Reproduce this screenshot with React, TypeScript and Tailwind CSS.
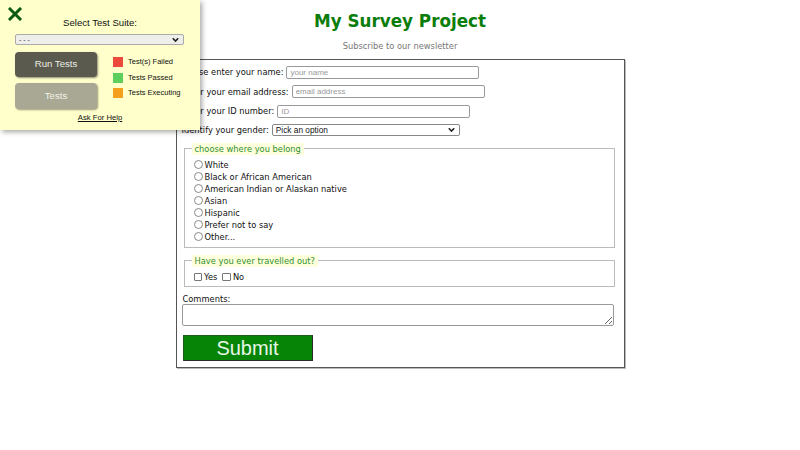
import React from 'react';

const races = [
  'White',
  'Black or African American',
  'American Indian or Alaskan native',
  'Asian',
  'Hispanic',
  'Prefer not to say',
  'Other...',
];

const Chevron: React.FC = () => (
  <svg width="7" height="5" viewBox="0 0 7 5" className="absolute right-[5px] top-1/2 -translate-y-1/2 pointer-events-none">
    <path d="M0.8 0.8 L3.5 3.6 L6.2 0.8" fill="none" stroke="#222" strokeWidth="1.6" />
  </svg>
);

const TestPanel: React.FC = () => {
  return (
    <aside className="absolute left-0 top-0 w-[200px] h-[130px] bg-[#ffffcc] shadow-[2px_2px_5px_rgba(0,0,0,0.35)] font-['Liberation_Sans',Arial,sans-serif] text-[#111]">
      {/* close */}
      <svg width="14" height="14" viewBox="0 0 14 14" className="absolute left-[8px] top-[7px]">
        <path d="M2 2 L12 12 M12 2 L2 12" stroke="#0b5a14" strokeWidth="3" strokeLinecap="square" />
      </svg>

      <p className="pt-[17px] text-center text-[9.6px] leading-[12px]">Select Test Suite:</p>

      <div className="relative mx-[15px] mt-[5px] h-[11px] w-[169px]">
        <select className="block h-full w-full appearance-none rounded-[2px] border border-[#aaa] bg-[#eeeeea] pl-[3px] text-[7px] leading-[9px] text-[#333]">
          <option>- - -</option>
        </select>
        <Chevron />
      </div>

      <div className="mt-[7px] flex pl-[15px]">
        <div className="flex w-[82px] flex-col gap-[6px]">
          <button className="h-[25px] w-full rounded-[4px] bg-[#5b5a4e] text-[9.6px] text-[#ecece4] shadow-[1px_1px_2px_rgba(0,0,0,0.45)]">
            Run Tests
          </button>
          <button className="h-[26px] w-full rounded-[4px] bg-[#a9a894] text-[9.6px] text-[#f1f1e6] shadow-[1px_1px_2px_rgba(0,0,0,0.4)]">
            Tests
          </button>
        </div>
        <ul className="ml-[16px] flex flex-col gap-[5.5px] pt-[5px] text-[7.5px]">
          <li className="flex h-[10px] items-center gap-[5px]">
            <span className="h-[10px] w-[10px] bg-[#ec4a3a]" />
            Test(s) Failed
          </li>
          <li className="flex h-[10px] items-center gap-[5px]">
            <span className="h-[10px] w-[10px] bg-[#5ccf5c]" />
            Tests Passed
          </li>
          <li className="flex h-[10px] items-center gap-[5px]">
            <span className="h-[10px] w-[10px] bg-[#f4a01c]" />
            Tests Executing
          </li>
        </ul>
      </div>

      <p className="mt-[4px] text-center text-[7.7px] leading-[10px]">
        <a href="#" className="underline">Ask For Help</a>
      </p>
    </aside>
  );
};

const TextRow: React.FC<{ label: string; placeholder: string; type?: string }> = ({ label, placeholder, type = 'text' }) => (
  <label className="flex h-[13px] items-center">
    <span>{label}</span>
    <input
      type={type}
      placeholder={placeholder}
      className="ml-[3px] h-[13px] w-[193px] rounded-[2px] border border-[#999] bg-white px-[3px] font-['Liberation_Sans',Arial,sans-serif] text-[8px] placeholder:text-[#999]"
    />
  </label>
);

export default function App() {
  return (
    <div className="relative min-h-screen bg-white font-['DejaVu_Sans',sans-serif] text-[8.3px] text-[#111]">
      <h1 className="pt-[10px] text-center text-[16.8px] font-bold leading-[22px] text-[#0b7d0b]">My Survey Project</h1>
      <p className="mt-[8px] text-center leading-[12px] text-[#777]">Subscribe to our newsletter</p>

      <form className="mx-auto mt-[7px] w-[449px] border border-[#555] pt-[6px] pb-[6px] pl-[5px] pr-[9px] shadow-[1px_1px_0_#bbb]">
        <div className="flex flex-col gap-[6.3px]">
          <TextRow label="Please enter your name:" placeholder="your name" />
          <TextRow label="Enter your email address:" placeholder="email address" type="email" />
          <TextRow label="Enter your ID number:" placeholder="ID" />
          <label className="flex h-[13px] items-center">
            <span>Identify your gender:</span>
            <span className="relative ml-[3px] h-[12px] w-[188px]">
              <select className="block h-full w-full appearance-none rounded-[2px] border border-[#888] bg-white pl-[3px] font-['Liberation_Sans',Arial,sans-serif] text-[8.3px] leading-[10px] text-[#111]">
                <option>Pick an option</option>
              </select>
              <Chevron />
            </span>
          </label>
        </div>

        <fieldset className="ml-[2px] mt-[6px] w-[431px] border border-[#bbb] px-[7px] pt-[4px] pb-[4px]">
          <legend className="bg-[#ffffdd] px-[3px] leading-[12px] text-[#2f8f2f]">choose where you belong</legend>
          {races.map((r) => (
            <label key={r} className="ml-[2px] flex h-[12px] items-center gap-[2px]">
              <input type="radio" name="race" className="h-[9px] w-[9px] appearance-none rounded-full border border-[#888] bg-white" />
              {r}
            </label>
          ))}
        </fieldset>

        <fieldset className="ml-[2px] mt-[7px] w-[431px] border border-[#bbb] px-[7px] pt-[4px] pb-[3px]">
          <legend className="bg-[#ffffdd] px-[3px] leading-[12px] text-[#2f8f2f]">Have you ever travelled out?</legend>
          <div className="ml-[2px] flex h-[12px] items-center">
            <label className="flex items-center gap-[2px]">
              <input type="checkbox" className="h-[8.5px] w-[8.5px] appearance-none rounded-[1px] border border-[#777] bg-white" />
              Yes
            </label>
            <label className="ml-[5px] flex items-center gap-[2px]">
              <input type="checkbox" className="h-[8.5px] w-[8.5px] appearance-none rounded-[1px] border border-[#777] bg-white" />
              No
            </label>
          </div>
        </fieldset>

        <p className="mt-[7px] pl-[1px] leading-[10px]">Comments:</p>
        <textarea className="block h-[22px] w-[432px] rounded-[2px] border border-[#999] bg-white" />

        <button
          type="submit"
          className="mt-[9px] ml-[1px] block h-[26px] w-[130px] border border-[#2a2a2a] border-t-[#1d5e1d] border-l-[#1d5e1d] bg-[#068406] font-['Liberation_Sans',Arial,sans-serif] text-[20px] leading-[24px] text-[#e6f7e6]"
        >
          Submit
        </button>
      </form>

      <TestPanel />
    </div>
  );
}
